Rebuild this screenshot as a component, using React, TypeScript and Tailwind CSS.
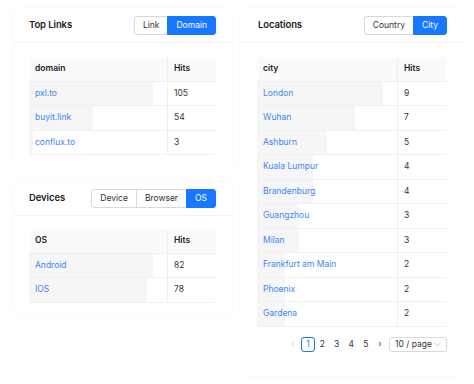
import React from 'react';

type Row = { name: string; hits: number };

const topLinks: Row[] = [
  { name: 'pxl.to', hits: 105 },
  { name: 'buyit.link', hits: 54 },
  { name: 'conflux.to', hits: 3 },
];

const devices: Row[] = [
  { name: 'Android', hits: 82 },
  { name: 'IOS', hits: 78 },
];

const cities: Row[] = [
  { name: 'London', hits: 9 },
  { name: 'Wuhan', hits: 7 },
  { name: 'Ashburn', hits: 5 },
  { name: 'Kuala Lumpur', hits: 4 },
  { name: 'Brandenburg', hits: 4 },
  { name: 'Guangzhou', hits: 3 },
  { name: 'Milan', hits: 3 },
  { name: 'Frankfurt am Main', hits: 2 },
  { name: 'Phoenix', hits: 2 },
  { name: 'Gardena', hits: 2 },
];

function Segmented({ options, active }: { options: string[]; active: string }) {
  return (
    <div className="flex h-[19px]">
      {options.map((o, i) => (
        <div
          key={o}
          className={
            'flex items-center px-[8px] text-[8.5px] border ' +
            (o === active
              ? 'bg-[#1677ff] border-[#1677ff] text-white'
              : 'bg-white border-[#d9d9d9] text-[#333]') +
            (i === 0 ? ' rounded-l-[3px]' : ' -ml-px') +
            (i === options.length - 1 ? ' rounded-r-[3px]' : '')
          }
        >
          {o}
        </div>
      ))}
    </div>
  );
}

function StatsTable({ label, rows, hitsWidth }: { label: string; rows: Row[]; hitsWidth: string }) {
  const max = Math.max(...rows.map(r => r.hits));
  return (
    <div className="rounded-[3px] overflow-hidden">
      <div className="flex h-[24.5px] bg-[#fafafa] border-b border-[#f0f0f0] text-[8.5px] font-semibold text-[#222]">
        <div className="flex-1 flex items-center px-[6px] border-r border-[#f0f0f0]">{label}</div>
        <div className={hitsWidth + ' flex items-center px-[6px]'}>Hits</div>
      </div>
      {rows.map(r => (
        <div key={r.name} className="flex h-[24.5px] border-b border-[#f0f0f0] text-[8.5px]">
          <div className="flex-1 relative flex items-center px-[6px] border-r border-[#f0f0f0]">
            <div
              className="absolute left-0 top-0 bottom-0 bg-[#f6f6f6]"
              style={{ width: `${(r.hits / max) * 90}%` }}
            />
            <span className="relative text-[#3b86f7]">{r.name}</span>
          </div>
          <div className={hitsWidth + ' flex items-center px-[6px] text-[#333]'}>{r.hits}</div>
        </div>
      ))}
    </div>
  );
}

function CardHeader({ title, options, active }: { title: string; options: string[]; active: string }) {
  return (
    <div className="h-[35px] pt-px flex items-center justify-between pl-[15px] pr-[16px] border-b border-[#f3f3f3]">
      <span className="text-[9.5px] font-semibold text-[#222] tracking-[-0.1px]">{title}</span>
      <Segmented options={options} active={active} />
    </div>
  );
}

export default function App() {
  return (
    <div
      className="w-[474px] h-[384px] bg-white flex gap-[9px] pl-[14px] pr-[11px] pt-[8px]"
      style={{ fontFamily: 'Inter, "Noto Sans", sans-serif' }}
    >
      <div className="w-[218px] flex flex-col gap-[14px]">
        <div className="bg-white rounded-[6px] shadow-[0_0_5px_rgba(0,0,0,0.03)]">
          <CardHeader title="Top Links" options={['Link', 'Domain']} active="Domain" />
          <div className="pt-[14px] pb-[12px] pl-[15px] pr-[16px]">
            <StatsTable label="domain" rows={topLinks} hitsWidth="w-[48px]" />
          </div>
        </div>
        <div className="bg-white rounded-[6px] shadow-[0_0_5px_rgba(0,0,0,0.03)]">
          <CardHeader title="Devices" options={['Device', 'Browser', 'OS']} active="OS" />
          <div className="pt-[13px] pb-[12px] pl-[15px] pr-[16px]">
            <StatsTable label="OS" rows={devices} hitsWidth="w-[48px]" />
          </div>
        </div>
      </div>
      <div className="w-[222px] h-[368px] bg-white rounded-[6px] shadow-[0_0_5px_rgba(0,0,0,0.03)]">
        <div className="h-[35px] pt-px flex items-center justify-between pl-[17px] pr-[16px] border-b border-[#f3f3f3]">
          <span className="text-[9.5px] font-semibold text-[#222] tracking-[-0.1px]">Locations</span>
          <Segmented options={['Country', 'City']} active="City" />
        </div>
        <div className="pt-[14px] pl-[16px] pr-[16px]">
          <StatsTable label="city" rows={cities} hitsWidth="w-[49px]" />
          <div className="flex items-center justify-end mt-[10px] h-[15px] text-[8.5px] text-[#333] whitespace-nowrap">
            <span className="w-[14px] text-center text-[#c8c8c8]">‹</span>
            <span className="w-[14px] h-[15px] flex items-center justify-center border border-[#1677ff] rounded-[3px] text-[#1677ff] ml-[1px]">1</span>
            {[2, 3, 4, 5].map(n => (
              <span key={n} className="w-[14.5px] text-center">{n}</span>
            ))}
            <span className="w-[14px] text-center">›</span>
            <div className="ml-[2px] w-[58px] h-[15px] border border-[#d9d9d9] rounded-[3px] flex items-center justify-between px-[5px]">
              <span>10 / page</span>
              <svg width="7" height="5" viewBox="0 0 7 5" fill="none">
                <path d="M0.5 0.8 L3.5 4 L6.5 0.8" stroke="#bfbfbf" strokeWidth="0.8" />
              </svg>
            </div>
          </div>
        </div>
      </div>
    </div>
  );
}
